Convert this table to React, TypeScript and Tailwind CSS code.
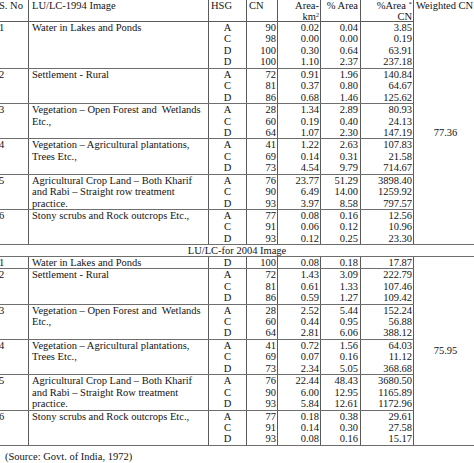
import React from "react";

type Row = [string, string, string, string, string];
type G = { no: string; desc: string[]; rows: Row[] };

const g1994: G[] = [
  {
    no: "1",
    desc: ["Water in Lakes and Ponds"],
    rows: [
      ["A", "90", "0.02", "0.04", "3.85"],
      ["C", "98", "0.00", "0.00", "0.19"],
      ["D", "100", "0.30", "0.64", "63.91"],
      ["D", "100", "1.10", "2.37", "237.18"],
    ],
  },
  {
    no: "2",
    desc: ["Settlement - Rural"],
    rows: [
      ["A", "72", "0.91", "1.96", "140.84"],
      ["C", "81", "0.37", "0.80", "64.67"],
      ["D", "86", "0.68", "1.46", "125.62"],
    ],
  },
  {
    no: "3",
    desc: ["Vegetation – Open Forest and  Wetlands", "Etc.,"],
    rows: [
      ["A", "28", "1.34", "2.89", "80.93"],
      ["C", "60", "0.19", "0.40", "24.13"],
      ["D", "64", "1.07", "2.30", "147.19"],
    ],
  },
  {
    no: "4",
    desc: ["Vegetation – Agricultural plantations,", "Trees Etc.,"],
    rows: [
      ["A", "41", "1.22", "2.63", "107.83"],
      ["C", "69", "0.14", "0.31", "21.58"],
      ["D", "73", "4.54", "9.79", "714.67"],
    ],
  },
  {
    no: "5",
    desc: [
      "Agricultural Crop Land – Both Kharif",
      "and Rabi – Straight row treatment",
      "practice.",
    ],
    rows: [
      ["A", "76", "23.77", "51.29", "3898.40"],
      ["C", "90", "6.49", "14.00", "1259.92"],
      ["D", "93", "3.97", "8.58", "797.57"],
    ],
  },
  {
    no: "6",
    desc: ["Stony scrubs and Rock outcrops Etc.,"],
    rows: [
      ["A", "77", "0.08", "0.16", "12.56"],
      ["C", "91", "0.06", "0.12", "10.96"],
      ["D", "93", "0.12", "0.25", "23.30"],
    ],
  },
];

const g2004: G[] = [
  {
    no: "1",
    desc: ["Water in Lakes and Ponds"],
    rows: [["D", "100", "0.08", "0.18", "17.87"]],
  },
  {
    no: "2",
    desc: ["Settlement - Rural"],
    rows: [
      ["A", "72", "1.43", "3.09", "222.79"],
      ["C", "81", "0.61", "1.33", "107.46"],
      ["D", "86", "0.59", "1.27", "109.42"],
    ],
  },
  {
    no: "3",
    desc: ["Vegetation – Open Forest and  Wetlands", "Etc.,"],
    rows: [
      ["A", "28", "2.52", "5.44", "152.24"],
      ["C", "60", "0.44", "0.95", "56.88"],
      ["D", "64", "2.81", "6.06", "388.12"],
    ],
  },
  {
    no: "4",
    desc: ["Vegetation – Agricultural plantations,", "Trees Etc.,"],
    rows: [
      ["A", "41", "0.72", "1.56", "64.03"],
      ["C", "69", "0.07", "0.16", "11.12"],
      ["D", "73", "2.34", "5.05", "368.68"],
    ],
  },
  {
    no: "5",
    desc: [
      "Agricultural Crop Land – Both Kharif",
      "and Rabi – Straight Row treatment",
      "practice.",
    ],
    rows: [
      ["A", "76", "22.44", "48.43", "3680.50"],
      ["C", "90", "6.00", "12.95", "1165.89"],
      ["D", "93", "5.84", "12.61", "1172.96"],
    ],
  },
  {
    no: "6",
    desc: ["Stony scrubs and Rock outcrops Etc.,"],
    rows: [
      ["A", "77", "0.18", "0.38", "29.61"],
      ["C", "91", "0.14", "0.30", "27.58"],
      ["D", "93", "0.08", "0.16", "15.17"],
    ],
  },
];

function Group({ g, last }: { g: G; last: boolean }) {
  return (
    <div className={last ? "flex" : "flex border-b border-[#6e6e6e]"}>
      <div className="w-[32px] shrink-0 border-r border-[#5a5a5a] pl-[2px] leading-[11.45px]">
        {g.no}
      </div>
      <div className="w-[180px] shrink-0 border-r border-[#5a5a5a] pl-[3px] leading-[11.45px]">
        {g.desc.map((l, i) => (
          <div key={i} className="whitespace-pre">
            {l}
          </div>
        ))}
      </div>
      <div className="flex flex-col">
        {g.rows.map((r, i) => (
          <div key={i} className="flex h-[11.45px] leading-[11.45px]">
            <div className="w-[38px] border-r border-[#5a5a5a] text-center">{r[0]}</div>
            <div className="w-[31px] border-r border-[#5a5a5a] pr-[1px] text-right">{r[1]}</div>
            <div className="w-[43px] border-r border-[#5a5a5a] pr-[1px] text-right">{r[2]}</div>
            <div className="w-[40px] border-r border-[#5a5a5a] pr-[2px] text-right">{r[3]}</div>
            <div className="w-[53px] border-r border-[#5a5a5a] pr-[1px] text-right">{r[4]}</div>
          </div>
        ))}
      </div>
    </div>
  );
}

function Section({ groups, weighted }: { groups: G[]; weighted: string }) {
  return (
    <div className="flex border-b border-[#6e6e6e]">
      <div className="flex w-[417px] shrink-0 flex-col">
        {groups.map((g, i) => (
          <Group key={i} g={g} last={i === groups.length - 1} />
        ))}
      </div>
      <div className="flex flex-1 items-center justify-center">{weighted}</div>
    </div>
  );
}

export default function App() {
  return (
    <div className="h-[463px] w-[474px] overflow-hidden bg-white font-['Liberation_Serif',serif] text-[10.5px] text-[#141414]">
      <div className="-ml-[3px] w-[480px]">
        <div className="flex h-[22px] leading-[11px]">
          <div className="w-[32px] shrink-0 border-r border-b border-[#5a5a5a] pl-[2px]">S. No</div>
          <div className="w-[180px] shrink-0 border-r border-b border-[#5a5a5a] pl-[3px]">
            LU/LC-1994 Image
          </div>
          <div className="w-[38px] shrink-0 border-r border-b border-[#5a5a5a] pl-[2px]">HSG</div>
          <div className="w-[31px] shrink-0 border-r border-b border-[#5a5a5a] pl-[2px]">CN</div>
          <div className="w-[43px] shrink-0 border-r border-b border-[#5a5a5a] pr-[1px] text-right">
            <div>Area-</div>
            <div>
              km<sup className="text-[6px]">2</sup>
            </div>
          </div>
          <div className="w-[40px] shrink-0 border-r border-b border-[#5a5a5a] pr-[2px] text-right">
            % Area
          </div>
          <div className="w-[53px] shrink-0 border-r border-b border-[#5a5a5a] pr-[1px] text-right">
            <div>
              %Area <sup className="text-[7px]">*</sup>
            </div>
            <div>CN</div>
          </div>
          <div className="flex-1 whitespace-nowrap pl-[2px]">Weighted CN</div>
        </div>
        <Section groups={g1994} weighted="77.36" />
        <div className="h-[11.45px] border-b border-[#6e6e6e] text-center leading-[11.45px]">
          LU/LC-for 2004 Image
        </div>
        <Section groups={g2004} weighted="75.95" />
        <div className="pl-[8px] pt-[5px] leading-[11px]">(Source: Govt. of India, 1972)</div>
      </div>
    </div>
  );
}
